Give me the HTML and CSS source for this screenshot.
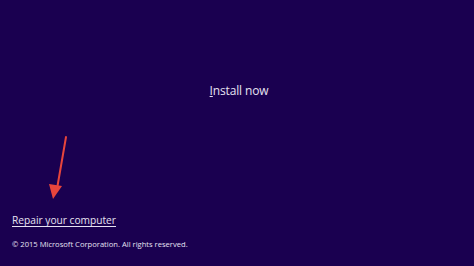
FILE: index.html
```html
<!DOCTYPE html>
<html>
<head>
<meta charset="utf-8">
<link rel="stylesheet" href="styles.css">
</head>
<body>
<div class="screen">
  <div class="center">
    <span class="install"><u>I</u>nstall now</span>
  </div>
  <div class="bottom">
    <span class="repair">Repair your computer</span>
    <span class="copy">© 2015 Microsoft Corporation. All rights reserved.</span>
  </div>
  <svg class="arrow" width="474" height="266" viewBox="0 0 474 266">
    <line x1="66" y1="137" x2="57.5" y2="186" stroke="#e8453c" stroke-width="2" stroke-linecap="round"/>
    <polygon points="53,199 49,184 62,186" fill="#e8453c"/>
  </svg>
</div>
</body>
</html>
```
FILE: styles.css
```css
html, body {
  margin: 0;
  padding: 0;
  background: #1a0050;
}
.screen {
  position: relative;
  width: 474px;
  height: 266px;
  display: flex;
  flex-direction: column;
  font-family: "Open Sans", "Noto Sans", sans-serif;
  color: #e6e2f2;
}
.center {
  flex: 1;
  display: flex;
  justify-content: center;
  padding-top: 82px;
  padding-left: 4px;
}
.install {
  font-size: 12px;
  line-height: 18px;
  height: 18px;
  letter-spacing: -0.15px;
}
.install u {
  text-decoration-thickness: 1px;
}
.bottom {
  display: flex;
  flex-direction: column;
  padding: 0 0 16px 12px;
  gap: 11px;
}
.repair {
  font-size: 10.2px;
  line-height: 14px;
  text-decoration: underline;
  text-underline-offset: 2px;
}
.copy {
  font-size: 7.6px;
  line-height: 12px;
}
.arrow {
  position: absolute;
  left: 0;
  top: 0;
}
```
